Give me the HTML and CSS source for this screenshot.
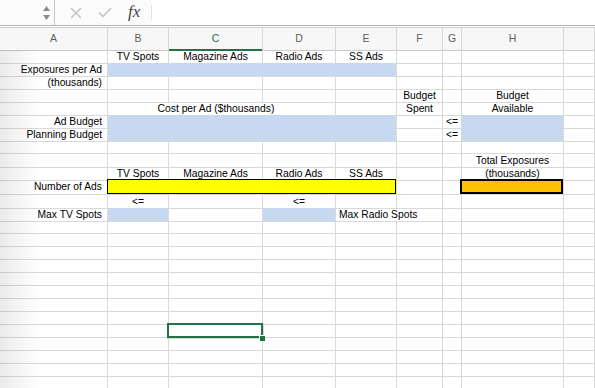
FILE: index.html
```html
<!DOCTYPE html>
<html lang="en">
<head>
    <meta charset="UTF-8">
    <meta name="viewport" content="width=device-width, initial-scale=1.0">
    <title>Advertising Mix</title>
    <link rel="stylesheet" href="styles.css">
</head>
<body>
    <div class="formula-bar">
        <div class="name-box">
            <svg class="spin" width="7" height="16" viewBox="0 0 7 16">
                <path d="M3.5 1 L7 6 L0 6 Z" fill="#8a8a8a"/>
                <path d="M0 10 L7 10 L3.5 15 Z" fill="#8a8a8a"/>
            </svg>
        </div>
        <div class="fx-buttons">
            <svg class="btn-cancel" width="12" height="12" viewBox="0 0 12 12">
                <path d="M1 1 L11 11 M11 1 L1 11" stroke="#c6c6c6" stroke-width="1.6" fill="none"/>
            </svg>
            <svg class="btn-enter" width="14" height="11" viewBox="0 0 14 11">
                <path d="M1 5.5 L5 9.5 L13 1" stroke="#c6c6c6" stroke-width="1.6" fill="none"/>
            </svg>
            <span class="fx">fx</span>
        </div>
        <div class="formula-input"></div>
    </div>

    <div class="col-heads">
        <div>A</div><div>B</div><div class="active">C</div><div>D</div><div>E</div><div>F</div><div>G</div><div>H</div><div></div>
    </div>

    <div class="sheet">
        <div class="row">
            <div class="cell"></div><div class="cell ctr">TV Spots</div><div class="cell ctr">Magazine Ads</div><div class="cell ctr">Radio Ads</div><div class="cell ctr">SS Ads</div><div class="cell"></div><div class="cell"></div><div class="cell"></div><div class="cell"></div>
        </div>
        <div class="row">
            <div class="cell r">Exposures per Ad</div><div class="cell span4 blue"></div><div class="cell"></div><div class="cell"></div><div class="cell"></div><div class="cell"></div>
        </div>
        <div class="row">
            <div class="cell r">(thousands)</div><div class="cell"></div><div class="cell"></div><div class="cell"></div><div class="cell"></div><div class="cell"></div><div class="cell"></div><div class="cell"></div><div class="cell"></div>
        </div>
        <div class="row">
            <div class="cell"></div><div class="cell"></div><div class="cell"></div><div class="cell"></div><div class="cell"></div><div class="cell ctr">Budget</div><div class="cell"></div><div class="cell ctr">Budget</div><div class="cell"></div>
        </div>
        <div class="row">
            <div class="cell"></div><div class="cell span3 ctr cost-title">Cost per Ad ($thousands)</div><div class="cell"></div><div class="cell ctr">Spent</div><div class="cell"></div><div class="cell ctr">Available</div><div class="cell"></div>
        </div>
        <div class="row">
            <div class="cell r">Ad Budget</div><div class="cell span4 blue joined"></div><div class="cell"></div><div class="cell ctr">&lt;=</div><div class="cell blue joined wide-left"></div><div class="cell"></div>
        </div>
        <div class="row">
            <div class="cell r">Planning Budget</div><div class="cell span4 blue"></div><div class="cell"></div><div class="cell ctr">&lt;=</div><div class="cell blue wide-left"></div><div class="cell"></div>
        </div>
        <div class="row">
            <div class="cell"></div><div class="cell"></div><div class="cell"></div><div class="cell"></div><div class="cell"></div><div class="cell"></div><div class="cell"></div><div class="cell"></div><div class="cell"></div>
        </div>
        <div class="row">
            <div class="cell"></div><div class="cell"></div><div class="cell"></div><div class="cell"></div><div class="cell"></div><div class="cell"></div><div class="cell"></div><div class="cell ctr">Total Exposures</div><div class="cell"></div>
        </div>
        <div class="row">
            <div class="cell"></div><div class="cell ctr">TV Spots</div><div class="cell ctr">Magazine Ads</div><div class="cell ctr">Radio Ads</div><div class="cell ctr">SS Ads</div><div class="cell"></div><div class="cell"></div><div class="cell ctr">(thousands)</div><div class="cell"></div>
        </div>
        <div class="row tall">
            <div class="cell r">Number of Ads</div><div class="cell span4 changing"></div><div class="cell"></div><div class="cell"></div><div class="cell objective"></div><div class="cell"></div>
        </div>
        <div class="row">
            <div class="cell"></div><div class="cell ctr">&lt;=</div><div class="cell"></div><div class="cell ctr">&lt;=</div><div class="cell"></div><div class="cell"></div><div class="cell"></div><div class="cell"></div><div class="cell"></div>
        </div>
        <div class="row">
            <div class="cell r">Max TV Spots</div><div class="cell blue"></div><div class="cell"></div><div class="cell blue"></div><div class="cell spill">Max Radio Spots</div><div class="cell"></div><div class="cell"></div><div class="cell"></div><div class="cell"></div>
        </div>
        <div class="row">
            <div class="cell"></div><div class="cell"></div><div class="cell"></div><div class="cell"></div><div class="cell"></div><div class="cell"></div><div class="cell"></div><div class="cell"></div><div class="cell"></div>
        </div>
        <div class="row">
            <div class="cell"></div><div class="cell"></div><div class="cell"></div><div class="cell"></div><div class="cell"></div><div class="cell"></div><div class="cell"></div><div class="cell"></div><div class="cell"></div>
        </div>
        <div class="row">
            <div class="cell"></div><div class="cell"></div><div class="cell"></div><div class="cell"></div><div class="cell"></div><div class="cell"></div><div class="cell"></div><div class="cell"></div><div class="cell"></div>
        </div>
        <div class="row">
            <div class="cell"></div><div class="cell"></div><div class="cell"></div><div class="cell"></div><div class="cell"></div><div class="cell"></div><div class="cell"></div><div class="cell"></div><div class="cell"></div>
        </div>
        <div class="row">
            <div class="cell"></div><div class="cell"></div><div class="cell"></div><div class="cell"></div><div class="cell"></div><div class="cell"></div><div class="cell"></div><div class="cell"></div><div class="cell"></div>
        </div>
        <div class="row">
            <div class="cell"></div><div class="cell"></div><div class="cell"></div><div class="cell"></div><div class="cell"></div><div class="cell"></div><div class="cell"></div><div class="cell"></div><div class="cell"></div>
        </div>
        <div class="row">
            <div class="cell"></div><div class="cell"></div><div class="cell"></div><div class="cell"></div><div class="cell"></div><div class="cell"></div><div class="cell"></div><div class="cell"></div><div class="cell"></div>
        </div>
        <div class="row">
            <div class="cell"></div><div class="cell"></div><div class="cell"></div><div class="cell"></div><div class="cell"></div><div class="cell"></div><div class="cell"></div><div class="cell"></div><div class="cell"></div>
        </div>
        <div class="row">
            <div class="cell"></div><div class="cell"></div><div class="cell selected"><span class="fill-handle"></span></div><div class="cell"></div><div class="cell"></div><div class="cell"></div><div class="cell"></div><div class="cell"></div><div class="cell"></div>
        </div>
        <div class="row">
            <div class="cell"></div><div class="cell"></div><div class="cell"></div><div class="cell"></div><div class="cell"></div><div class="cell"></div><div class="cell"></div><div class="cell"></div><div class="cell"></div>
        </div>
        <div class="row">
            <div class="cell"></div><div class="cell"></div><div class="cell"></div><div class="cell"></div><div class="cell"></div><div class="cell"></div><div class="cell"></div><div class="cell"></div><div class="cell"></div>
        </div>
        <div class="row">
            <div class="cell"></div><div class="cell"></div><div class="cell"></div><div class="cell"></div><div class="cell"></div><div class="cell"></div><div class="cell"></div><div class="cell"></div><div class="cell"></div>
        </div>
        <div class="row">
            <div class="cell"></div><div class="cell"></div><div class="cell"></div><div class="cell"></div><div class="cell"></div><div class="cell"></div><div class="cell"></div><div class="cell"></div><div class="cell"></div>
        </div>
    </div>
</body>
</html>
```

FILE: styles.css
```css
* {
    box-sizing: border-box;
}
body {
    margin: 0;
    font-family: "Liberation Sans", Arial, sans-serif;
    background-color: #fff;
    color: #000;
    overflow: hidden;
}
.formula-bar {
    display: flex;
    height: 26px;
    background-color: #fbfbfb;
    border-bottom: 1px solid #b4b4b4;
}
.name-box {
    width: 55px;
    border-right: 1px solid #c9c9c9;
    display: flex;
    justify-content: flex-end;
    align-items: center;
    padding-right: 4px;
}
.fx-buttons {
    width: 97px;
    display: flex;
    align-items: center;
    padding-left: 15px;
    border-right: 1px solid #e2e2e2;
    margin: 5px 0;
}
.btn-cancel {
    margin-right: 16px;
}
.btn-enter {
    margin-right: 16px;
}
.fx {
    font-family: "Liberation Serif", "Times New Roman", serif;
    font-style: italic;
    font-size: 17px;
    color: #444;
    margin-top: -2px;
}
.formula-input {
    flex: 1;
    background-color: #fff;
}
.col-heads,
.row {
    display: grid;
    grid-template-columns: 108px 61px 94px 73px 61px 46px 19px 102px 1fr;
}
.col-heads {
    margin-top: 1px;
    height: 23px;
    border-top: 1px solid #cdcdcd;
    background-color: #f7f7f7;
}
.col-heads div {
    border-right: 1px solid #d8d8d8;
    border-bottom: 1px solid #c9c9c9;
    text-align: center;
    font-size: 10.5px;
    line-height: 21px;
    color: #5e5e5e;
}
.col-heads .active {
    color: #217346;
    border-bottom: 2px solid #217346;
}
.sheet {
    position: relative;
}
.sheet::before {
    content: "";
    position: absolute;
    top: 0;
    bottom: 0;
    left: 0;
    width: 40px;
    background: linear-gradient(to right, rgba(0, 0, 0, 0.08), rgba(0, 0, 0, 0));
    pointer-events: none;
    z-index: 5;
}
.row {
    height: 13px;
}
.row.tall {
    height: 15px;
}
.cell {
    border-right: 1px solid #d9d9d9;
    border-bottom: 1px solid #d9d9d9;
    font-size: 10.3px;
    line-height: 12px;
    padding: 1px 3px 0;
    white-space: nowrap;
}
.r {
    text-align: right;
    padding-right: 5px;
}
.ctr {
    text-align: center;
}
.span3 {
    grid-column: span 3;
}
.span4 {
    grid-column: span 4;
}
.cost-title {
    padding-right: 14px;
}
.blue {
    background-color: #c6d9f0;
}
.blue.joined {
    border-bottom-color: #c6d9f0;
}
.wide-left {
    margin-left: -1px;
}
.changing {
    position: relative;
    margin: -1px 0 0 -1px;
    background-color: #ffff00;
    box-shadow: inset 0 0 0 1px #000;
}
.objective {
    position: relative;
    margin: -1px 0 0 -2px;
    background-color: #ffc000;
    box-shadow: inset 0 0 0 2px #000;
}
.spill {
    border-right-color: transparent;
}
.selected {
    position: relative;
    z-index: 2;
    margin: -2px -1px -1px -2px;
    box-shadow: inset 0 0 0 2px #217346;
}
.fill-handle {
    position: absolute;
    right: -2px;
    bottom: -3px;
    width: 6px;
    height: 6px;
    background-color: #217346;
    border: 1px solid #fff;
    border-width: 1px 0 0 1px;
}
```
